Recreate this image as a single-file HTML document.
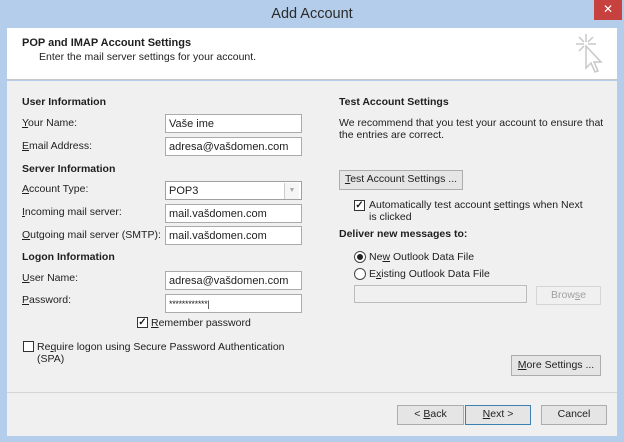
<!DOCTYPE html>
<html><head><meta charset="utf-8"><style>
*{margin:0;padding:0;box-sizing:border-box}
body{width:624px;height:442px;background:#b3cdeb;font-family:"Liberation Sans",sans-serif;font-size:10.5px;line-height:12px;color:#1e1e1e;position:relative;overflow:hidden}
.a{position:absolute;white-space:nowrap}
.b{font-weight:bold}
.in{position:absolute;background:#fff;border:1px solid #ababab;padding:2px 0 0 3px;height:19px;font-size:11px;line-height:14px;white-space:nowrap;overflow:hidden}
.btn{position:absolute;background:#e5e5e5;border:1px solid #adadad;text-align:center;line-height:17px;font-size:10.5px;white-space:nowrap}
.cb{position:absolute;width:11px;height:11px;border:1px solid #333;background:#fff;font-size:10px;line-height:9px;text-align:center;font-weight:bold}
.rd{position:absolute;width:12px;height:12px;border:1px solid #444;border-radius:50%;background:#fff}
u{text-decoration:underline}
</style></head><body>
<div class="a" style="left:0;top:6px;width:624px;text-align:center;font-size:14.5px;line-height:16px;color:#2b2b2b">Add Account</div>
<div class="a" style="left:594px;top:0;width:28px;height:20px;background:#c7413f;color:#fff;text-align:center;font-size:12px;line-height:19px">✕</div>
<div class="a" style="left:7px;top:28px;width:610px;height:52px;background:#fff;border-bottom:1px solid #c8c8c8"></div>
<div class="a b" style="left:22px;top:37px;font-size:11px">POP and IMAP Account Settings</div>
<div class="a" style="left:39px;top:51px">Enter the mail server settings for your account.</div>
<svg class="a" style="left:572px;top:30px" width="36" height="48" viewBox="0 0 36 48" fill="none" stroke="#c8c8c8" stroke-width="1.5">
<path d="M14 4v8M4 14h8M16 14h8M7 7l5 5M21 7l-5 5M7 21l5-5"/>
<path d="M14 16l0 22 5-5 4 9 3-1-4-9 7 0z" fill="#fff"/></svg>
<div class="a" style="left:7px;top:81px;width:610px;height:311px;background:#f0f0f0"></div>
<div class="a" style="left:7px;top:392px;width:610px;height:44px;background:#f0f0f0;border-top:1px solid #d5d5d5"></div>

<div class="a b" style="left:22px;top:96px">User Information</div>
<div class="a" style="left:22px;top:117px"><u>Y</u>our Name:</div>
<div class="in" style="left:165px;top:114px;width:137px">Vaše ime</div>
<div class="a" style="left:22px;top:140px"><u>E</u>mail Address:</div>
<div class="in" style="left:165px;top:137px;width:137px">adresa@vašdomen.com</div>
<div class="a b" style="left:22px;top:163px">Server Information</div>
<div class="a" style="left:22px;top:183px"><u>A</u>ccount Type:</div>
<div class="in" style="left:165px;top:181px;width:137px;border-color:#a0a0a0">POP3</div>
<div class="a" style="left:284px;top:183px;width:15px;height:16px;border-left:1px solid #ccc;background:#f5f5f5;color:#aaa;font-size:7px;text-align:center;line-height:16px">▼</div>
<div class="a" style="left:22px;top:206px"><u>I</u>ncoming mail server:</div>
<div class="in" style="left:165px;top:204px;width:137px">mail.vašdomen.com</div>
<div class="a" style="left:22px;top:229px"><u>O</u>utgoing mail server (SMTP):</div>
<div class="in" style="left:165px;top:226px;width:137px">mail.vašdomen.com</div>
<div class="a b" style="left:22px;top:251px">Logon Information</div>
<div class="a" style="left:22px;top:272px"><u>U</u>ser Name:</div>
<div class="in" style="left:165px;top:271px;width:137px">adresa@vašdomen.com</div>
<div class="a" style="left:22px;top:294px"><u>P</u>assword:</div>
<div class="in" style="left:165px;top:294px;width:137px;font-size:9px;letter-spacing:-0.3px">************|</div>
<div class="cb" style="left:137px;top:317px">✓</div>
<div class="a" style="left:151px;top:317px"><u>R</u>emember password</div>
<div class="cb" style="left:23px;top:341px"></div>
<div class="a" style="left:37px;top:341px">Re<u>q</u>uire logon using Secure Password Authentication</div>
<div class="a" style="left:37px;top:353px">(SPA)</div>

<div class="a b" style="left:339px;top:96px">Test Account Settings</div>
<div class="a" style="left:339px;top:117px">We recommend that you test your account to ensure that</div>
<div class="a" style="left:339px;top:129px">the entries are correct.</div>
<div class="btn" style="left:339px;top:170px;width:124px;height:20px"><u>T</u>est Account Settings ...</div>
<div class="cb" style="left:354px;top:200px">✓</div>
<div class="a" style="left:369px;top:199px">Automatically test account <u>s</u>ettings when Next</div>
<div class="a" style="left:369px;top:211px">is clicked</div>
<div class="a b" style="left:339px;top:228px">Deliver new messages to:</div>
<div class="rd" style="left:354px;top:251px"><div style="position:absolute;left:2px;top:2px;width:6px;height:6px;border-radius:50%;background:#222"></div></div>
<div class="a" style="left:369px;top:251px">Ne<u>w</u> Outlook Data File</div>
<div class="rd" style="left:354px;top:268px"></div>
<div class="a" style="left:369px;top:268px">E<u>x</u>isting Outlook Data File</div>
<div class="a" style="left:354px;top:285px;width:173px;height:18px;border:1px solid #bcbcbc;background:#f0f0f0"></div>
<div class="btn" style="left:536px;top:286px;width:65px;height:19px;background:#f0f0f0;border-color:#d5d5d5;color:#a0a0a0">Brow<u>s</u>e</div>
<div class="btn" style="left:511px;top:355px;width:90px;height:21px;line-height:19px"><u>M</u>ore Settings ...</div>

<div class="btn" style="left:397px;top:405px;width:67px;height:20px">&lt; <u>B</u>ack</div>
<div class="btn" style="left:465px;top:405px;width:66px;height:20px;border-color:#3c7fb1"><u>N</u>ext &gt;</div>
<div class="btn" style="left:541px;top:405px;width:66px;height:20px">Cancel</div>
</body></html>
